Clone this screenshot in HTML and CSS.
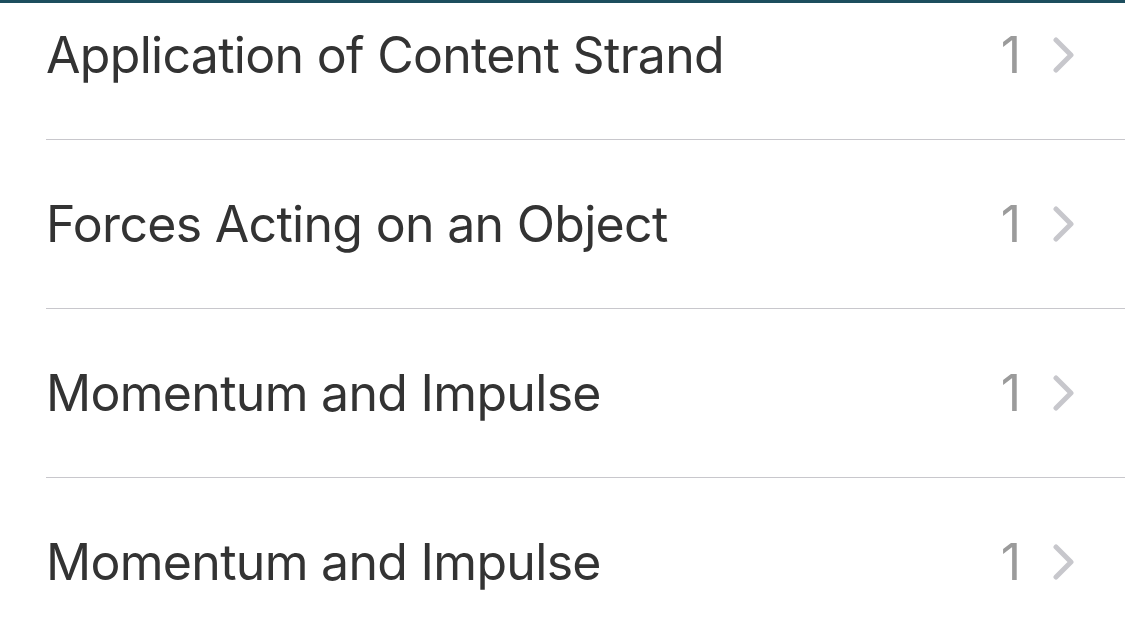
FILE: index.html
```html
<!DOCTYPE html>
<html>
<head>
<meta charset="utf-8">
<link rel="stylesheet" href="styles.css">
</head>
<body>
<div class="topbar"></div>
<ul class="list">
  <li class="row"><span class="title">Application of Content Strand</span><span class="count">1</span><svg class="chev" viewBox="0 0 22 36"><path d="M3 3 L18 18 L3 33"/></svg></li>
  <li class="row"><span class="title">Forces Acting on an Object</span><span class="count">1</span><svg class="chev" viewBox="0 0 22 36"><path d="M3 3 L18 18 L3 33"/></svg></li>
  <li class="row"><span class="title">Momentum and Impulse</span><span class="count">1</span><svg class="chev" viewBox="0 0 22 36"><path d="M3 3 L18 18 L3 33"/></svg></li>
  <li class="row"><span class="title">Momentum and Impulse</span><span class="count">1</span><svg class="chev" viewBox="0 0 22 36"><path d="M3 3 L18 18 L3 33"/></svg></li>
</ul>
</body>
</html>
```
FILE: styles.css
```css
html, body {
  margin: 0;
  padding: 0;
  background: #ffffff;
  overflow: hidden;
  height: 632px;
}
body {
  font-family: Inter, "Noto Sans", sans-serif;
  color: #333333;
}
.topbar {
  height: 3px;
  background: #1d4e5e;
  position: relative;
  z-index: 2;
}
.list {
  list-style: none;
  margin: -32px 0 0 0;
  padding: 0 0 0 46px;
}
.row {
  display: flex;
  align-items: center;
  height: 168px;
  border-bottom: 1px solid #c8c7cc;
  padding-right: 50px;
}
.title {
  flex: 1;
  font-size: 50px;
  font-weight: 400;
  letter-spacing: -0.7px;
}
.count {
  font-size: 50px;
  color: #9b9b9b;
  margin-right: 32px;
}
.chev {
  width: 22px;
  height: 36px;
  fill: none;
  stroke: #c7c7cc;
  stroke-width: 5;
  stroke-linecap: round;
  stroke-linejoin: round;
}
```
